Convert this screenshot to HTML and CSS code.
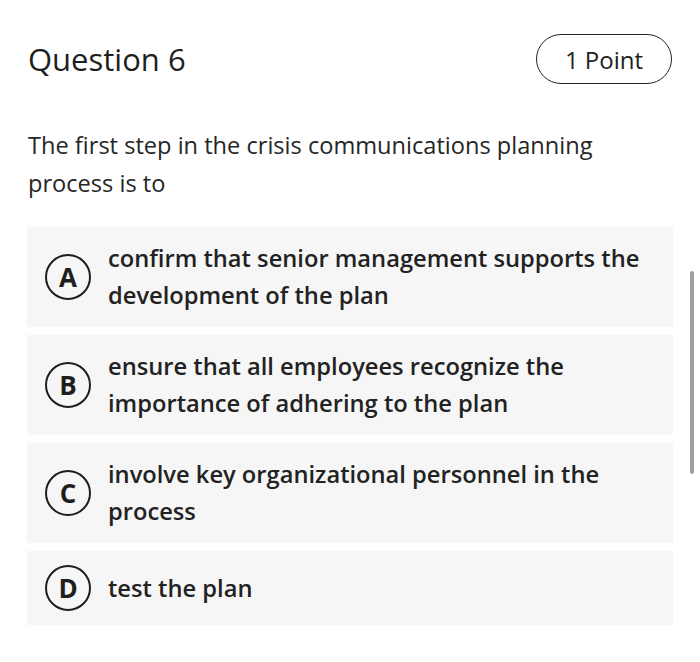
FILE: index.html
```html
<!DOCTYPE html>
<html>
<head>
<meta charset="utf-8">
<link rel="stylesheet" href="styles.css">
</head>
<body>
<div class="page">
  <div class="header">
    <h1 class="title">Question 6</h1>
    <div class="pill">1 Point</div>
  </div>
  <p class="question">The first step in the crisis communications planning process is to</p>
  <div class="options">
    <div class="option">
      <div class="badge-wrap"><span class="badge">A</span></div>
      <div class="text">confirm that senior management supports the development of the plan</div>
    </div>
    <div class="option">
      <div class="badge-wrap"><span class="badge">B</span></div>
      <div class="text">ensure that all employees recognize the importance of adhering to the plan</div>
    </div>
    <div class="option">
      <div class="badge-wrap"><span class="badge">C</span></div>
      <div class="text">involve key organizational personnel in the process</div>
    </div>
    <div class="option">
      <div class="badge-wrap"><span class="badge">D</span></div>
      <div class="text">test the plan</div>
    </div>
  </div>
  <div class="scrollbar"></div>
</div>
</body>
</html>
```
FILE: styles.css
```css
html, body {
  margin: 0;
  padding: 0;
  background: #ffffff;
}
body {
  font-family: "Open Sans", "Noto Sans", sans-serif;
  color: #222222;
}
.page {
  position: relative;
  width: 700px;
  height: 662px;
  padding: 34px 27px 0 27px;
  box-sizing: border-box;
}
.header {
  display: flex;
  justify-content: space-between;
  align-items: center;
}
.title {
  margin: 0 0 0 1px;
  font-size: 31px;
  font-weight: 400;
  line-height: 50px;
  color: #1e1e1e;
}
.pill {
  width: 136px;
  height: 50px;
  box-sizing: border-box;
  border: 1.5px solid #222;
  border-radius: 25px;
  display: flex;
  align-items: center;
  justify-content: center;
  font-size: 24px;
  margin-right: 1px;
}
.question {
  margin: 42px 0 25px 1px;
  font-size: 23.6px;
  line-height: 38px;
  color: #262626;
  max-width: 600px;
}
.options {
  display: flex;
  flex-direction: column;
  gap: 8px;
}
.option {
  display: flex;
  align-items: center;
  background: #f6f6f6;
  padding: 13px 10px 13px 18px;
  min-height: 48px;
}
.badge-wrap {
  flex: 0 0 46px;
  height: 48px;
  display: flex;
  align-items: center;
  justify-content: center;
  margin-right: 17px;
}
.badge {
  width: 46px;
  height: 46px;
  box-sizing: border-box;
  border: 2.5px solid #1e1e1e;
  border-radius: 50%;
  display: flex;
  align-items: center;
  justify-content: center;
  font-size: 26px;
  font-weight: 700;
  color: #1e1e1e;
}
.text {
  font-size: 23.7px;
  font-weight: 600;
  line-height: 37px;
  color: #222;
}
.scrollbar {
  position: absolute;
  left: 690px;
  top: 271px;
  width: 4px;
  height: 203px;
  border-radius: 2px;
  background: #a0a0a0;
}
```
